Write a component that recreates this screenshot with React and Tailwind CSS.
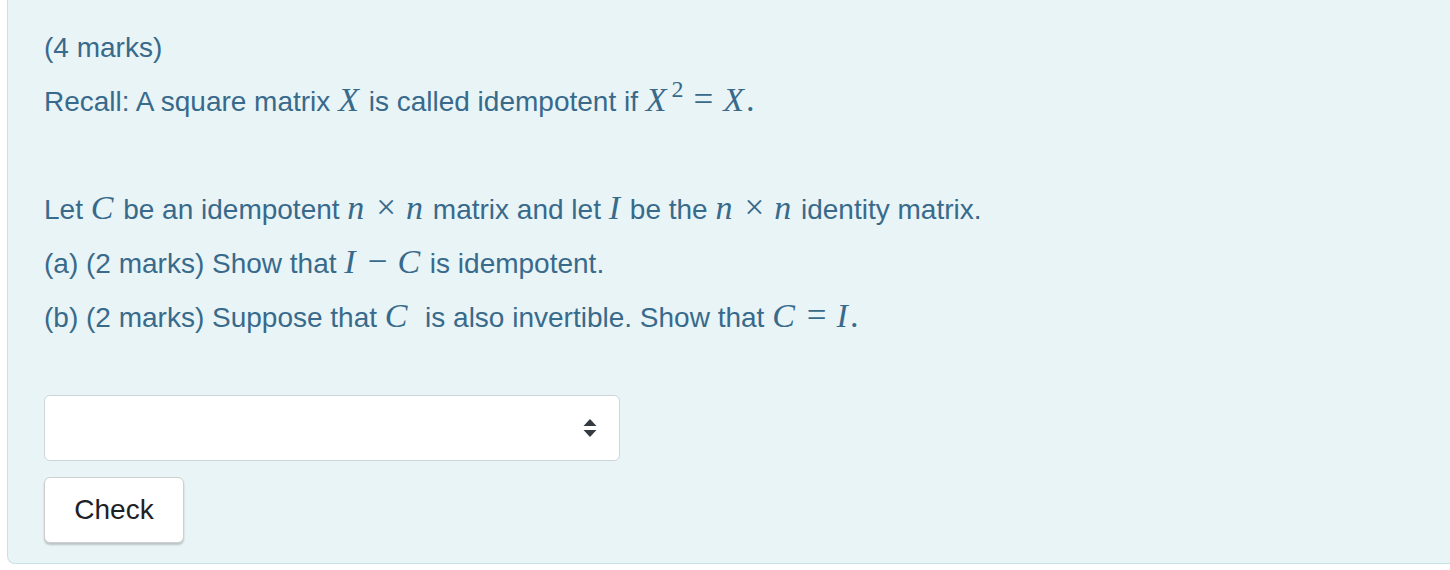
import React from 'react'

const serif = { fontFamily: '"Liberation Serif", "Times New Roman", serif' }

function M({ children }) {
  return <span className="italic text-[34px] leading-none mr-[2px]" style={serif}>{children}</span>
}

function Op({ children }) {
  return <span className="text-[35px] leading-none mx-[10px]" style={serif}>{children}</span>
}

export default function App() {
  return (
    <div className="w-full h-[570px] bg-white pl-[7px] overflow-hidden" style={{ fontFamily: '"Liberation Sans", Arial, sans-serif' }}>
      <div className="h-[564px] bg-[#e9f4f7] border-l border-b border-[#c5e2e8] rounded-bl-lg pl-[36px] pt-[21px] text-[#386a8b] text-[28px]">
        <p className="leading-[54px] h-[54px]">(4 marks)</p>
        <p className="leading-[54px] h-[54px]">
          Recall: A square matrix <M>X</M> is called idempotent if <M>X</M>
          <span className="text-[24px] leading-none relative -top-[14px] ml-[3px]" style={serif}>2</span>
          <Op>=</Op><M>X</M><span style={serif} className="text-[34px] leading-none">.</span>
        </p>
        <p className="leading-[54px] h-[54px]">&nbsp;</p>
        <p className="leading-[54px] h-[54px]">
          Let <M>C</M> be an idempotent <M>n</M><Op>×</Op><M>n</M> matrix and let <M>I</M> be the <M>n</M><Op>×</Op><M>n</M> identity matrix.
        </p>
        <p className="leading-[54px] h-[54px]">
          (a) (2 marks) Show that <M>I</M><Op>−</Op><M>C</M> is idempotent.
        </p>
        <p className="leading-[54px] h-[54px]">
          (b) (2 marks) Suppose that <M>C</M>&nbsp; is also invertible. Show that <M>C</M><Op>=</Op><M>I</M><span style={serif} className="text-[34px] leading-none">.</span>
        </p>

        <div className="mt-[50px] w-[576px] h-[66px] bg-white border border-[#ced4da] rounded-md flex items-center justify-end pr-[22px]">
          <svg width="14" height="20" viewBox="0 0 14 20">
            <path d="M7 1 L13.5 8 L0.5 8 Z" fill="#343a40" />
            <path d="M0.5 12 L13.5 12 L7 19 Z" fill="#343a40" />
          </svg>
        </div>

        <button className="mt-[16px] w-[140px] h-[66px] bg-white border border-[#cfcfcf] rounded-md shadow-[0_2px_2px_rgba(0,0,0,0.2)] text-[#1d2125] text-[28px]">
          Check
        </button>
      </div>
    </div>
  )
}
